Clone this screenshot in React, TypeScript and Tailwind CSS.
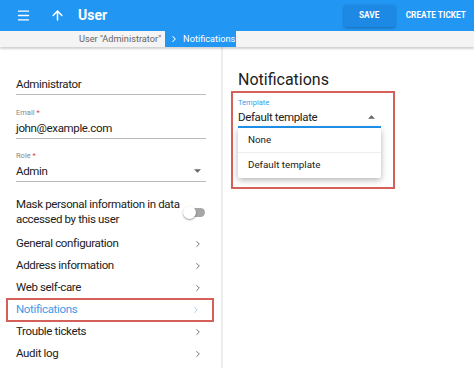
import { Menu, ArrowUp, ChevronRight } from 'lucide-react';

const sections = [
  { label: 'General configuration' },
  { label: 'Address information' },
  { label: 'Web self-care' },
  { label: 'Notifications', active: true },
  { label: 'Trouble tickets' },
  { label: 'Audit log' },
];

function Caret({ up }: { up?: boolean }) {
  return (
    <svg width="7" height="4" viewBox="0 0 10 5" className="text-[#666]">
      {up ? <path d="M0 5 L5 0 L10 5 Z" fill="currentColor" /> : <path d="M0 0 L5 5 L10 0 Z" fill="currentColor" />}
    </svg>
  );
}

export default function App() {
  return (
    <div className="w-[474px] h-[370px] bg-white overflow-hidden font-['Roboto',sans-serif] text-[#212121]">
      {/* Top bar */}
      <div className="h-[31px] bg-[#2196f3] flex items-center text-white">
        <Menu className="w-[15px] h-[15px] ml-[16px]" strokeWidth={2.2} />
        <ArrowUp className="w-[15px] h-[15px] ml-[19px]" strokeWidth={2.4} />
        <span className="ml-[13px] text-[14px] font-bold">User</span>
        <div className="ml-auto flex items-center mr-[8px]">
          <button className="w-[51px] h-[22px] bg-[#1e88e5] shadow-[0_1px_3px_rgba(0,0,0,0.3)] rounded-[2px] text-[8.3px] font-bold">
            SAVE
          </button>
          <button className="ml-[11px] text-[8.3px] font-bold">CREATE TICKET</button>
        </div>
      </div>

      {/* Breadcrumb */}
      <div className="h-[16px] bg-[#f4f4f4] flex items-stretch shadow-[0_2px_2px_rgba(0,0,0,0.18)] relative z-10">
        <span className="ml-[79px] text-[9.2px] text-[#666] leading-[16px]">User "Administrator"</span>
        <span className="ml-[4px] w-[71px] bg-[#2196f3] text-white text-[9.2px] leading-[16px] flex items-center">
          <ChevronRight className="shrink-0 w-[10px] h-[10px] ml-[4px] mr-[4px]" strokeWidth={2.5} />
          Notifications
        </span>
      </div>

      <div className="flex h-[321px] text-[11.5px] tracking-[-0.35px]">
        {/* Left panel */}
        <div className="w-[223px] border-r-2 border-[#ececec] pl-[16px] pr-[15px] pt-[27px]">
          <div className="h-[20px] leading-[20px]">Administrator</div>
          <div className="border-b border-[#bbb]" />

          <div className="mt-[13px] text-[7.5px] tracking-normal text-[#888] leading-[10px]">
            Email <span className="text-[#e53935]">*</span>
          </div>
          <div className="leading-[20px]">john@example.com</div>
          <div className="border-b border-[#bbb]" />

          <div className="mt-[12px] text-[7.5px] tracking-normal text-[#888] leading-[10px]">
            Role <span className="text-[#e53935]">*</span>
          </div>
          <div className="flex items-center justify-between leading-[20px] pr-[5px]">
            <span>Admin</span>
            <Caret />
          </div>
          <div className="border-b border-[#bbb]" />

          <div className="mt-[15px] flex items-center justify-between">
            <div className="leading-[15px] w-[165px]">Mask personal information in data accessed by this user</div>
            <div className="relative w-[20px] h-[9px] mr-[1px] mt-[1px]">
              <div className="absolute inset-0 rounded-full bg-[#a6a6a6]" />
              <div className="absolute left-[-2px] top-[-2px] w-[13px] h-[13px] rounded-full bg-white shadow-[0_1px_2px_rgba(0,0,0,0.4)]" />
            </div>
          </div>

          <div className="mt-[6px]">
            {sections.map((s) =>
              s.active ? (
                <div
                  key={s.label}
                  className="-ml-[10px] -mr-[8px] -my-[1px] h-[24px] border-2 border-[#d3615a] flex items-center justify-between pl-[8px] pr-[11px] text-[#3b9be8]"
                >
                  <span>{s.label}</span>
                  <ChevronRight className="w-[10px] h-[10px] text-[#8cc1ee]" strokeWidth={2} />
                </div>
              ) : (
                <div key={s.label} className="h-[22px] flex items-center justify-between pr-[3px]">
                  <span>{s.label}</span>
                  <ChevronRight className="w-[10px] h-[10px] text-[#555]" strokeWidth={2} />
                </div>
              )
            )}
          </div>
        </div>

        {/* Right panel */}
        <div className="flex-1 pl-[8px] pt-[22px]">
          <div className="ml-[7px] text-[16px] tracking-normal leading-[22px]">Notifications</div>
          <div className="w-[164px] h-[98px] border-2 border-[#d3615a] pl-[5px] pt-[5px]">
            <div className="text-[7.5px] tracking-normal text-[#3b9be8] leading-[10px]">Template</div>
            <div className="w-[143px] flex items-center justify-between leading-[18px] pr-[6px]">
              <span>Default template</span>
              <Caret up />
            </div>
            <div className="w-[143px] border-b-2 border-[#2196f3]" />
            <div className="w-[143px] bg-white rounded-[2px] shadow-[0_2px_6px_rgba(0,0,0,0.3)] text-[9.8px] tracking-normal">
              <div className="h-[25px] flex items-center pl-[10px] border-b border-[#eee]">None</div>
              <div className="h-[25px] flex items-center pl-[10px]">Default template</div>
            </div>
          </div>
        </div>
      </div>
    </div>
  );
}
